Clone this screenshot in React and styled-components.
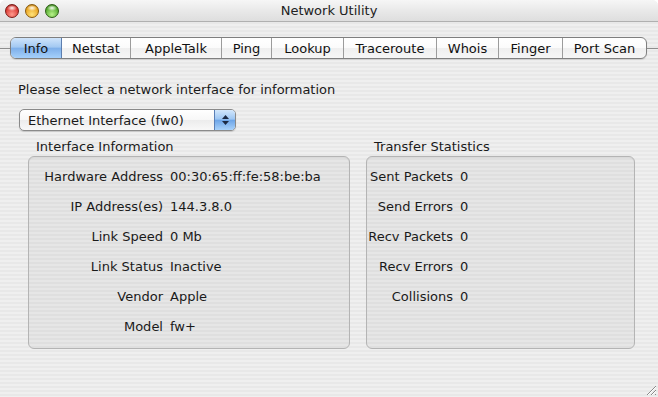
import React from "react";
import styled, { createGlobalStyle } from "styled-components";

const Global = createGlobalStyle`
  html, body { margin: 0; padding: 0; background: #ffffff; }
  body { font-family: "DejaVu Sans", "Liberation Sans", sans-serif; font-size: 13px; color: #1a1a1a; }
  * { box-sizing: border-box; }
`;

const Window = styled.div`
  position: relative;
  width: 658px;
  height: 397px;
  display: flex;
  flex-direction: column;
  border-radius: 6px 6px 0 0;
  overflow: hidden;
  background: repeating-linear-gradient(
    to bottom,
    #efefef 0px,
    #efefef 2px,
    #e8e8e8 2px,
    #e8e8e8 4px
  );
`;

const TitleBar = styled.div`
  position: relative;
  height: 22px;
  flex: none;
  display: flex;
  align-items: center;
  justify-content: center;
  background: linear-gradient(to bottom, #f6f6f6 0%, #e9e9e9 50%, #dedede 100%);
  border-bottom: 1px solid #b0b0b0;
`;

const Lights = styled.div`
  position: absolute;
  left: 5px;
  top: 4px;
  display: flex;
  gap: 6px;
`;

const Light = styled.span`
  width: 14px;
  height: 14px;
  border-radius: 50%;
  border: 1px solid ${(p) => p.$rim};
  background: radial-gradient(ellipse 5px 3px at 50% 25%, rgba(255,255,255,0.95) 0%, rgba(255,255,255,0) 100%),
    radial-gradient(circle at 50% 78%, ${(p) => p.$light} 0%, ${(p) => p.$color} 70%, ${(p) => p.$rim} 100%);
`;

const Title = styled.div`
  font-size: 13px;
  color: #222;
  line-height: 16px;
`;

const Content = styled.div`
  flex: 1;
  display: flex;
  flex-direction: column;
`;

const TabRow = styled.div`
  margin-top: 15px;
  display: flex;
  align-items: center;
  &::before, &::after {
    content: "";
    height: 1px;
    background: #8e8e8e;
    flex: 1;
  }
  &::before { flex: none; width: 10px; }
`;

const TabStrip = styled.div`
  display: flex;
  height: 22px;
  border: 1px solid #7f7f7f;
  border-radius: 6px;
  overflow: hidden;
  background: linear-gradient(to bottom, #ffffff 0%, #fbfbfb 50%, #efefef 51%, #f6f6f6 100%);
  box-shadow: 0 1px 1px rgba(0,0,0,0.12);
`;

const Tab = styled.div`
  width: ${(p) => p.$w}px;
  display: flex;
  align-items: center;
  justify-content: center;
  font-size: 13px;
  color: #111;
  border-left: 1px solid #9c9c9c;
  &:first-child { border-left: none; }
  ${(p) =>
    p.$active &&
    `
    background: linear-gradient(to bottom, #cfe4fb 0%, #a3c9f2 45%, #7fb0ea 52%, #a5d0fb 100%);
    border-right: 1px solid #5d7eae;
    margin-right: -1px;
    position: relative;
  `}
`;

const Body = styled.div`
  padding: 23px 23px 0 18px;
  display: flex;
  flex-direction: column;
`;

const Prompt = styled.div`
  line-height: 16px;
  font-size: 13px;
`;

const Popup = styled.div`
  margin-top: 11px;
  margin-left: 1px;
  width: 217px;
  height: 22px;
  display: flex;
  border: 1px solid #8a8a8a;
  border-radius: 5px;
  overflow: hidden;
  background: linear-gradient(to bottom, #ffffff 0%, #f7f7f7 50%, #ececec 51%, #f8f8f8 100%);
  box-shadow: 0 1px 1px rgba(0,0,0,0.15);
`;

const PopupText = styled.div`
  flex: 1;
  padding-left: 8px;
  display: flex;
  align-items: center;
  font-size: 13px;
`;

const PopupArrows = styled.div`
  width: 21px;
  display: flex;
  flex-direction: column;
  align-items: center;
  justify-content: center;
  gap: 2px;
  border-left: 1px solid #5a7fb6;
  background: linear-gradient(to bottom, #d3e7fc 0%, #9ec7f3 45%, #6ea6e8 52%, #a9d2fb 100%);
`;

const Groups = styled.div`
  margin-top: 8px;
  margin-left: 10px;
  display: grid;
  grid-template-columns: 322px 269px;
  column-gap: 16px;
`;

const Group = styled.div`
  display: flex;
  flex-direction: column;
`;

const GroupLabel = styled.div`
  padding-left: 8px;
  line-height: 16px;
  height: 16px;
  margin-bottom: 1px;
  font-size: 13px;
`;

const GroupBox = styled.div`
  height: 193px;
  border: 1px solid #b4b4b4;
  border-radius: 6px;
  background: rgba(0, 0, 0, 0.035);
  padding-top: 4px;
  display: grid;
  grid-template-columns: ${(p) => p.$label}px 1fr;
  grid-auto-rows: 30px;
  column-gap: 7px;
  align-content: start;
  box-shadow: inset 0 1px 1px rgba(0,0,0,0.06);
`;

const Label = styled.div`
  text-align: right;
  white-space: nowrap;
  display: flex;
  align-items: center;
  justify-content: flex-end;
`;

const Value = styled.div`
  white-space: nowrap;
  display: flex;
  align-items: center;
`;

const Grip = styled.svg`
  position: absolute;
  right: 1px;
  bottom: 1px;
`;

const tabs = [
  ["Info", 51],
  ["Netstat", 69],
  ["AppleTalk", 91],
  ["Ping", 50],
  ["Lookup", 72],
  ["Traceroute", 93],
  ["Whois", 62],
  ["Finger", 64],
  ["Port Scan", 84],
];

const info = [
  ["Hardware Address", "00:30:65:ff:fe:58:be:ba"],
  ["IP Address(es)", "144.3.8.0"],
  ["Link Speed", "0 Mb"],
  ["Link Status", "Inactive"],
  ["Vendor", "Apple"],
  ["Model", "fw+"],
];

const stats = [
  ["Sent Packets", "0"],
  ["Send Errors", "0"],
  ["Recv Packets", "0"],
  ["Recv Errors", "0"],
  ["Collisions", "0"],
];

export default function App() {
  return (
    <>
      <Global />
      <Window>
        <TitleBar>
          <Lights>
            <Light $color="#d8322c" $light="#ff9a8e" $rim="#7a1a16" />
            <Light $color="#e8a01a" $light="#ffe27a" $rim="#8a5a0c" />
            <Light $color="#4fa62a" $light="#b8f28a" $rim="#2c5e14" />
          </Lights>
          <Title>Network Utility</Title>
        </TitleBar>
        <Content>
          <TabRow>
            <TabStrip>
              {tabs.map(([t, w], i) => (
                <Tab key={t} $w={w} $active={i === 0}>
                  {t}
                </Tab>
              ))}
            </TabStrip>
          </TabRow>
          <Body>
            <Prompt>Please select a network interface for information</Prompt>
            <Popup>
              <PopupText>Ethernet Interface (fw0)</PopupText>
              <PopupArrows>
                <svg width="7" height="4" viewBox="0 0 7 4">
                  <path d="M3.5 0 L7 4 L0 4 Z" fill="#1c2a44" />
                </svg>
                <svg width="7" height="4" viewBox="0 0 7 4">
                  <path d="M0 0 L7 0 L3.5 4 Z" fill="#1c2a44" />
                </svg>
              </PopupArrows>
            </Popup>
            <Groups>
              <Group>
                <GroupLabel>Interface Information</GroupLabel>
                <GroupBox $label={134}>
                  {info.map(([l, v]) => (
                    <React.Fragment key={l}>
                      <Label>{l}</Label>
                      <Value>{v}</Value>
                    </React.Fragment>
                  ))}
                </GroupBox>
              </Group>
              <Group>
                <GroupLabel>Transfer Statistics</GroupLabel>
                <GroupBox $label={86}>
                  {stats.map(([l, v]) => (
                    <React.Fragment key={l}>
                      <Label>{l}</Label>
                      <Value>{v}</Value>
                    </React.Fragment>
                  ))}
                </GroupBox>
              </Group>
            </Groups>
          </Body>
        </Content>
        <Grip width="13" height="13" viewBox="0 0 13 13">
          <path d="M12 3 L3 12 M12 7 L7 12 M12 11 L11 12" stroke="#8a8a8a" strokeWidth="1" />
          <path d="M12 4 L4 12 M12 8 L8 12" stroke="#ffffff" strokeWidth="1" />
        </Grip>
      </Window>
    </>
  );
}
